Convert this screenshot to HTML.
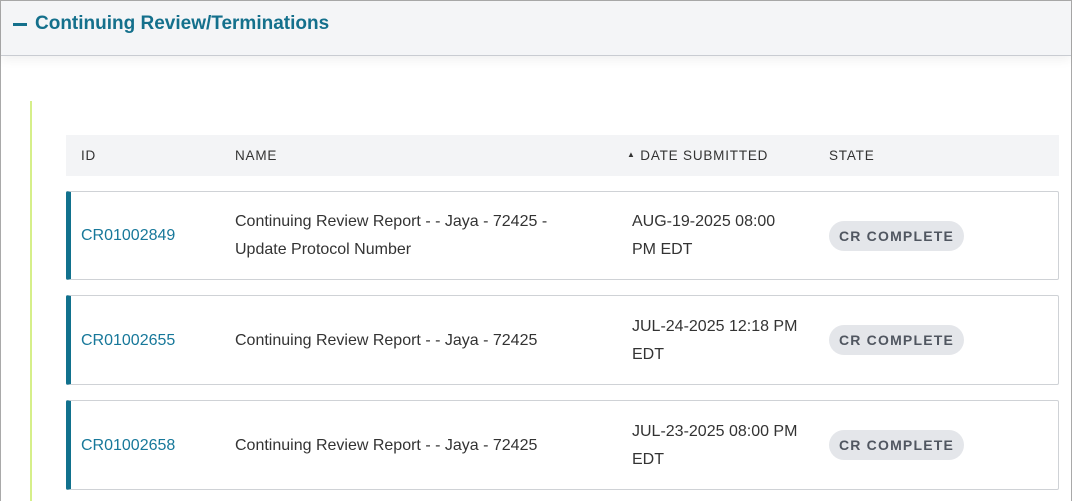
<!DOCTYPE html>
<html><head><style>
*{box-sizing:border-box;margin:0;padding:0}
body{width:1072px;height:501px;overflow:hidden;background:#fff;font-family:"Liberation Sans",sans-serif;position:relative}
.frame{position:absolute;left:0;top:0;width:1072px;height:501px;border:1px solid #a9a9a9;border-bottom:none}
.hdr{position:absolute;left:1px;top:1px;width:1070px;height:55px;background:#f4f5f7;border-bottom:1px solid #c9ccd2;box-shadow:0 4px 10px rgba(0,0,0,.06)}
.hdr .dash{position:absolute;left:12px;top:22px;width:14px;height:3px;background:#14708c}
.hdr .t{position:absolute;left:34px;top:12px;font-size:19px;color:#14708c;font-weight:600}
.green{position:absolute;left:30px;top:101px;width:2px;height:400px;background:#d6ef8a}
.th{position:absolute;left:66px;top:135px;width:993px;height:41px;background:#f3f4f6;font-size:13.5px;letter-spacing:.8px;color:#333}
.th span{position:absolute;top:13px}
.row{position:absolute;left:66px;width:993px;border:1px solid #cfd2d6;border-left:5px solid #11718d;border-radius:2px;background:#fff;font-size:16px;color:#333}
.row .id{position:absolute;left:10px;color:#17789a}
.row .nm{position:absolute;left:164px;line-height:28px;width:360px}
.row .dt{position:absolute;left:561px;line-height:28px;width:168px}
.pill{position:absolute;left:758px;width:135px;height:30px;border-radius:15px;background:#e4e6ea;color:#505660;font-size:14px;font-weight:700;letter-spacing:1.2px;text-align:center;line-height:30px}
</style></head><body>
<div class="frame"></div>
<div class="hdr"><div class="dash"></div><div class="t">Continuing Review/Terminations</div></div>
<div class="green"></div>
<div class="th"><span style="left:15px">ID</span><span style="left:169px">NAME</span><span style="left:561px"><span style="font-size:8px;position:relative;top:-3px">▲</span> DATE SUBMITTED</span><span style="left:763px">STATE</span></div>

<div class="row" style="top:191px;height:89px">
<div class="id" style="top:35px">CR01002849</div>
<div class="nm" style="top:16px">Continuing Review Report - - Jaya - 72425 - Update Protocol Number</div>
<div class="dt" style="top:16px">AUG-19-2025 08:00 PM EDT</div>
<div class="pill" style="top:29px">CR COMPLETE</div>
</div>
<div class="row" style="top:295px;height:90px">
<div class="id" style="top:36px">CR01002655</div>
<div class="nm" style="top:31px">Continuing Review Report - - Jaya - 72425</div>
<div class="dt" style="top:17px">JUL-24-2025 12:18 PM EDT</div>
<div class="pill" style="top:29px">CR COMPLETE</div>
</div>
<div class="row" style="top:400px;height:90px">
<div class="id" style="top:36px">CR01002658</div>
<div class="nm" style="top:31px">Continuing Review Report - - Jaya - 72425</div>
<div class="dt" style="top:17px">JUL-23-2025 08:00 PM EDT</div>
<div class="pill" style="top:29px">CR COMPLETE</div>
</div>
</body></html>
